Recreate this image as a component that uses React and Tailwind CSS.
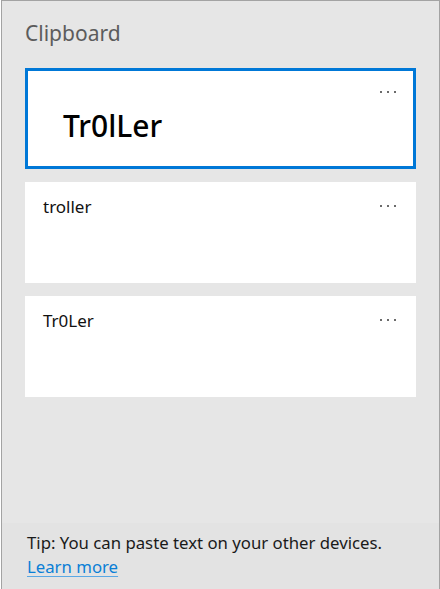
import React from 'react';

const items = [
  { id: 1, text: 'Tr0lLer', image: true, selected: true },
  { id: 2, text: 'troller' },
  { id: 3, text: 'Tr0Ler' },
];

const MoreDots = ({ selected }) => (
  <div
    className={`absolute flex gap-[5px] ${
      selected ? 'right-[17px] top-[20px]' : 'right-[20px] top-[23px]'
    }`}>
    <span className="w-[2px] h-[2px] bg-[#6b6b6b]" />
    <span className="w-[2px] h-[2px] bg-[#6b6b6b]" />
    <span className="w-[2px] h-[2px] bg-[#6b6b6b]" />
  </div>
);

const ClipItem = ({ item }) => (
  <div
    className={`relative bg-white ${
      item.selected ? 'h-[101px] border-[3px] border-[#0078d7]' : 'h-[101px]'
    }`}>
    <MoreDots selected={item.selected} />
    {item.image ? (
      <div className="pl-[35px] pt-[36px] text-[30px] leading-[38px] font-medium text-black">
        {item.text}
      </div>
    ) : (
      <div className="pl-[18px] pt-[14px] text-[17px] leading-[22px] text-[#111]">
        {item.text}
      </div>
    )}
  </div>
);

export default function App() {
  return (
    <div
      className="w-[440px] h-[589px] bg-white overflow-hidden"
      style={{ fontFamily: '"Segoe UI", "Noto Sans", sans-serif' }}>
      <div className="ml-px w-[439px] h-[589px] flex flex-col bg-[#e6e6e6] border-l border-t border-r border-[#a3a3a3]">
        <div className="flex-1 px-[23px]">
          {/* Header */}
          <h1 className="pt-[17px] pb-[20px] text-[21px] leading-[30px] text-[#5c5c5c]">Clipboard</h1>
          {/* Items */}
          <div className="flex flex-col gap-[13px]">
            {items.map((item) => (
              <ClipItem key={item.id} item={item} />
            ))}
          </div>
        </div>
        {/* Footer */}
        <div className="h-[66px] bg-[#e3e3e3] px-[25px] pt-[8px]">
          <p className="text-[16.75px] leading-[24px] text-[#1a1a1a]">
            Tip: You can paste text on your other devices.
          </p>
          <a className="text-[16.75px] leading-[24px] text-[#0a7fd6] underline underline-offset-[3px] decoration-[#5ba8e4]">
            Learn more
          </a>
        </div>
      </div>
    </div>
  );
}
